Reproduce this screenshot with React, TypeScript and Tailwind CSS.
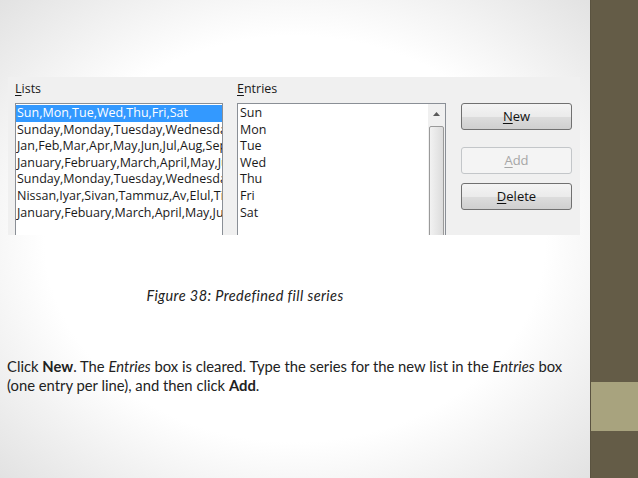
import React from 'react';

const lists = [
  'Sun,Mon,Tue,Wed,Thu,Fri,Sat',
  'Sunday,Monday,Tuesday,Wednesday,Thursday',
  'Jan,Feb,Mar,Apr,May,Jun,Jul,Aug,Sep,Oct',
  'January,February,March,April,May,June',
  'Sunday,Monday,Tuesday,Wednesday,Thursday',
  'Nissan,Iyar,Sivan,Tammuz,Av,Elul,Tishrei',
  'January,Febuary,March,April,May,June',
];

const entries = ['Sun', 'Mon', 'Tue', 'Wed', 'Thu', 'Fri', 'Sat'];

function WinButton({ label, disabled }: { label: string; disabled?: boolean }) {
  return (
    <div
      className={`h-[27px] w-[111px] flex items-center justify-center rounded-[3px] border text-[13px] ${
        disabled
          ? 'border-[#c3c6c9] bg-[#f4f4f4] text-[#a6a6a6]'
          : 'border-[#707070] bg-[linear-gradient(#f4f4f4,#ebebeb_50%,#dddddd_51%,#cfcfcf)] text-[#111]'
      }`}
    >
      <span>
        <span className="underline underline-offset-2">{label[0]}</span>
        {label.slice(1)}
      </span>
    </div>
  );
}

export default function App() {
  return (
    <div className="w-[638px] h-[478px] flex overflow-hidden font-['Lato',sans-serif]">
      {/* slide body */}
      <div className="w-[590px] h-full flex flex-col bg-[radial-gradient(ellipse_at_center,#ffffff_60%,#e2e2e2_100%)]">
        {/* dialog screenshot */}
        <div className="mt-[77px] ml-[8px] w-[572px] h-[158px] bg-[#f0f0f0] overflow-hidden flex font-['Open_Sans',sans-serif] text-[#1a1a1a]">
          <div className="ml-[7px] w-[208px] flex flex-col">
            <div className="h-[26px] shrink-0 pt-[3px] text-[12.5px] leading-[18px]">
              <span className="underline underline-offset-2">L</span>ists
            </div>
            <div className="h-[160px] shrink-0 border border-[#8a8f96] bg-white pt-[1px] overflow-hidden">
              {lists.map((l, i) => (
                <div
                  key={i}
                  className={`h-[16.6px] px-[1px] whitespace-nowrap overflow-hidden text-[12.5px] leading-[16.6px] ${
                    i === 0 ? 'bg-[#3399ff] text-white' : ''
                  }`}
                >
                  {l}
                </div>
              ))}
            </div>
          </div>

          <div className="ml-[14px] w-[209px] flex flex-col">
            <div className="h-[26px] shrink-0 pt-[3px] text-[12.5px] leading-[18px]">
              <span className="underline underline-offset-2">E</span>ntries
            </div>
            <div className="h-[160px] shrink-0 border border-[#8a8f96] bg-white flex">
              <div className="flex-1 pt-[1px] pl-[2px]">
                {entries.map((e) => (
                  <div key={e} className="h-[16.6px] text-[12.5px] leading-[16.6px]">
                    {e}
                  </div>
                ))}
              </div>
              <div className="w-[17px] bg-[#f0f0f0] flex flex-col items-center">
                <div className="h-[20px] flex items-center justify-center">
                  <svg width="7" height="4" viewBox="0 0 7 4">
                    <path d="M0 4 L3.5 0 L7 4 Z" fill="#5a5a5a" />
                  </svg>
                </div>
                <div className="mt-[2px] w-[15px] flex-1 rounded-[2px] border border-[#9a9a9a] bg-[linear-gradient(to_right,#f2f2f2,#dcdcdc)]" />
              </div>
            </div>
          </div>

          <div className="ml-[15px] pt-[26px] flex flex-col">
            <WinButton label="New" />
            <div className="mt-[17px]">
              <WinButton label="Add" disabled />
            </div>
            <div className="mt-[9px]">
              <WinButton label="Delete" />
            </div>
          </div>
        </div>

        <p className="mt-[50px] w-[490px] text-center italic text-[14.5px] tracking-[0.4px] text-[#222]">
          Figure 38: Predefined fill series
        </p>

        <p className="mt-[50px] ml-[7px] w-[580px] text-[14.8px] leading-[19px] text-[#222] whitespace-nowrap">
          Click <b>New</b>. The <i>Entries</i> box is cleared. Type the series for the new list in the{' '}
          <i>Entries</i> box
          <br />
          (one entry per line), and then click <b>Add</b>.
        </p>
      </div>

      {/* side bar */}
      <div className="w-[48px] h-full flex flex-col bg-[#645c47] border-l border-[#5a5340]">
        <div className="h-[382px] shrink-0" />
        <div className="h-[49px] shrink-0 bg-[#a8a37e]" />
      </div>
    </div>
  );
}
